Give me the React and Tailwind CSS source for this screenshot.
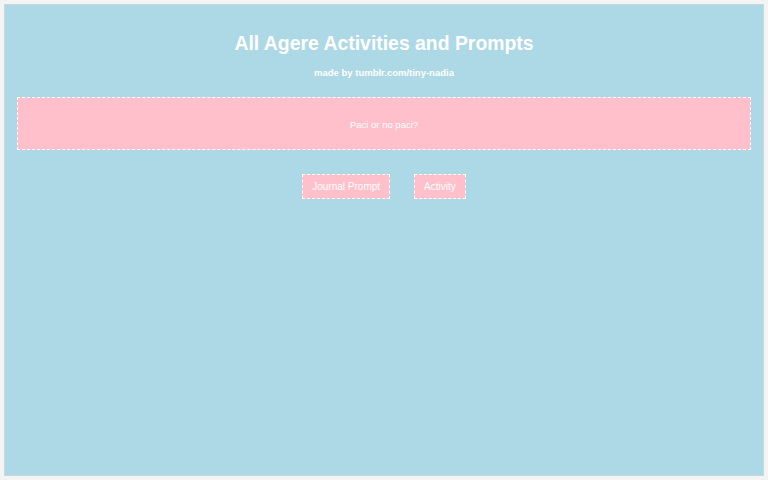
import React, { useState } from "react";

const prompts = ["Paci or no paci?"];

const App = () => {
  const [prompt, setPrompt] = useState(prompts[0]);

  return (
    <div className="min-h-[480px] bg-[#f4f4f5] p-[4px] font-['Liberation_Sans',Arial,sans-serif]">
      <div className="h-[472px] border border-[#c9d6dc] bg-[#add8e6] px-[12px]">
        {/* Header */}
        <h1 className="pt-[25px] text-center text-[19.4px] font-bold leading-[26px] text-white">
          All Agere Activities and Prompts
        </h1>
        <p className="mt-[11px] text-center text-[9.5px] font-bold leading-[12px] text-white">
          made by tumblr.com/tiny-nadia
        </p>

        {/* Prompt box */}
        <div className="mt-[18px] flex h-[53px] items-center justify-center border border-dashed border-white bg-[#ffc0cb] pt-[3px]">
          <span className="text-[9.5px] text-white">{prompt}</span>
        </div>

        {/* Buttons */}
        <div className="mt-[24px] flex justify-center gap-[24px]">
          <button
            onClick={() => setPrompt(prompts[0])}
            className="h-[25px] border border-dashed border-white bg-[#ffc0cb] px-[9px] font-['Liberation_Sans',Arial,sans-serif] text-[10px] text-white"
          >
            Journal Prompt
          </button>
          <button
            onClick={() => setPrompt(prompts[0])}
            className="h-[25px] border border-dashed border-white bg-[#ffc0cb] px-[9px] font-['Liberation_Sans',Arial,sans-serif] text-[10px] text-white"
          >
            Activity
          </button>
        </div>
      </div>
    </div>
  );
};

export default App;
